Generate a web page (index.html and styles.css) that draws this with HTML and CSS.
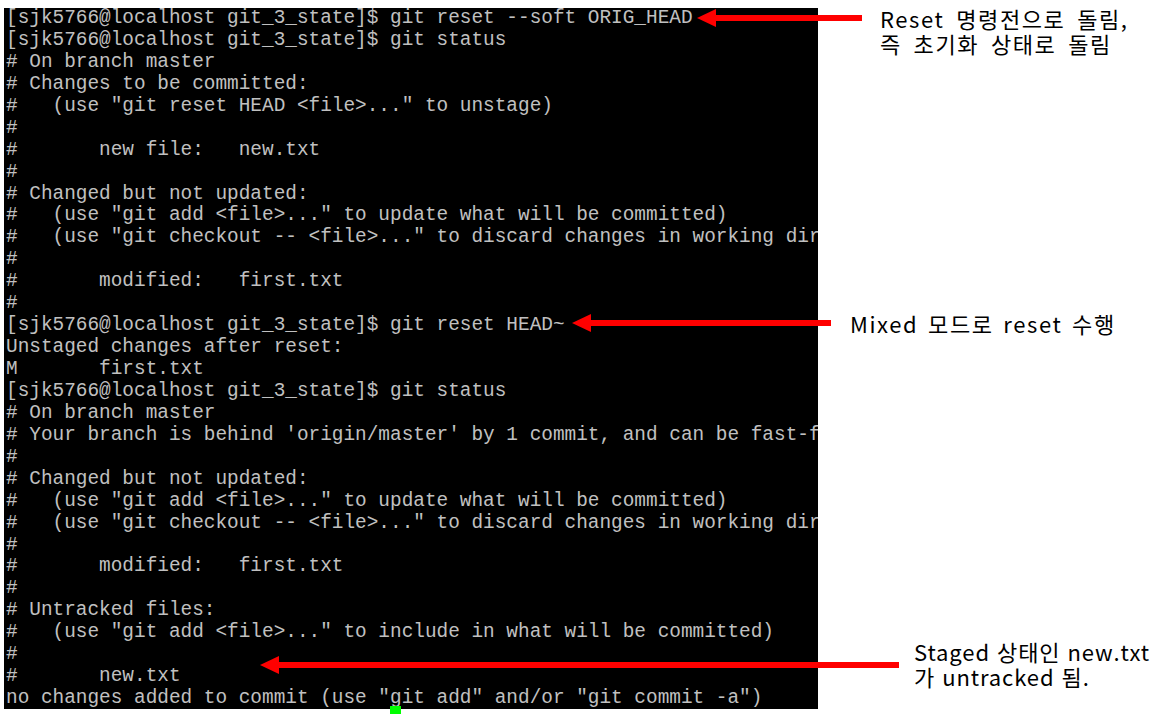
FILE: index.html
```html
<!DOCTYPE html>
<html lang="ko">
<head>
<meta charset="utf-8">
<title>git reset</title>
<link rel="stylesheet" href="styles.css">
</head>
<body>
<div class="page">
  <div class="terminal">
<pre class="term-text">[sjk5766@localhost git_3_state]$ git reset --soft ORIG_HEAD
[sjk5766@localhost git_3_state]$ git status
# On branch master
# Changes to be committed:
#   (use "git reset HEAD &lt;file&gt;..." to unstage)
#
#       new file:   new.txt
#
# Changed but not updated:
#   (use "git add &lt;file&gt;..." to update what will be committed)
#   (use "git checkout -- &lt;file&gt;..." to discard changes in working directory)
#
#       modified:   first.txt
#
[sjk5766@localhost git_3_state]$ git reset HEAD~
Unstaged changes after reset:
M       first.txt
[sjk5766@localhost git_3_state]$ git status
# On branch master
# Your branch is behind 'origin/master' by 1 commit, and can be fast-forwarded.
#
# Changed but not updated:
#   (use "git add &lt;file&gt;..." to update what will be committed)
#   (use "git checkout -- &lt;file&gt;..." to discard changes in working directory)
#
#       modified:   first.txt
#
# Untracked files:
#   (use "git add &lt;file&gt;..." to include in what will be committed)
#
#       new.txt
no changes added to commit (use "git add" and/or "git commit -a")</pre>
  </div>
  <div class="cursor"></div>

  <svg class="arrows" width="1166" height="714" viewBox="0 0 1166 714">
    <g fill="#ff0000">
      <rect x="712" y="15" width="150" height="6"/>
      <polygon points="697,18 716,9 716,27"/>
      <rect x="588" y="320" width="243" height="6"/>
      <polygon points="572,323 591,314 591,332"/>
      <rect x="276" y="662" width="623" height="6"/>
      <polygon points="260,665 279,656 279,674"/>
    </g>
  </svg>

  <div class="note note-reset">Reset 명령전으로 돌림,<br>즉 초기화 상태로 돌림</div>
  <div class="note note-mixed">Mixed 모드로 reset 수행</div>
  <div class="note note-staged">Staged 상태인 new.txt<br>가 untracked 됨.</div>
</div>
</body>
</html>
```
FILE: styles.css
```css
html, body {
  margin: 0;
  padding: 0;
  background: #ffffff;
}

.page {
  position: relative;
  width: 1166px;
  height: 714px;
  overflow: hidden;
}

.terminal {
  margin: 8px 0 0 4px;
  width: 812px;
  height: 701px;
  padding-left: 2px;
  background: #000000;
  overflow: hidden;
}

.term-text {
  margin: 0;
  font-family: "Liberation Mono", "Courier New", monospace;
  font-size: 19.4px;
  line-height: 21.93px;
  color: #c0c0c0;
  white-space: pre;
}

.cursor {
  position: absolute;
  left: 390px;
  top: 706px;
  width: 11px;
  height: 8px;
  background: #00ff00;
}

.arrows {
  position: absolute;
  left: 0;
  top: 0;
}

.note {
  position: absolute;
  font-family: "Noto Sans CJK KR", "Noto Sans", sans-serif;
  font-size: 22px;
  line-height: 25px;
  letter-spacing: 1.3px;
  color: #000000;
  white-space: nowrap;
}

.note-reset {
  left: 880px;
  top: 6px;
  letter-spacing: 1.6px;
  word-spacing: 4px;
}

.note-mixed {
  left: 850px;
  top: 311px;
  letter-spacing: 1.6px;
  word-spacing: 2px;
}

.note-staged {
  left: 914px;
  top: 639px;
  letter-spacing: 0.9px;
}
```
